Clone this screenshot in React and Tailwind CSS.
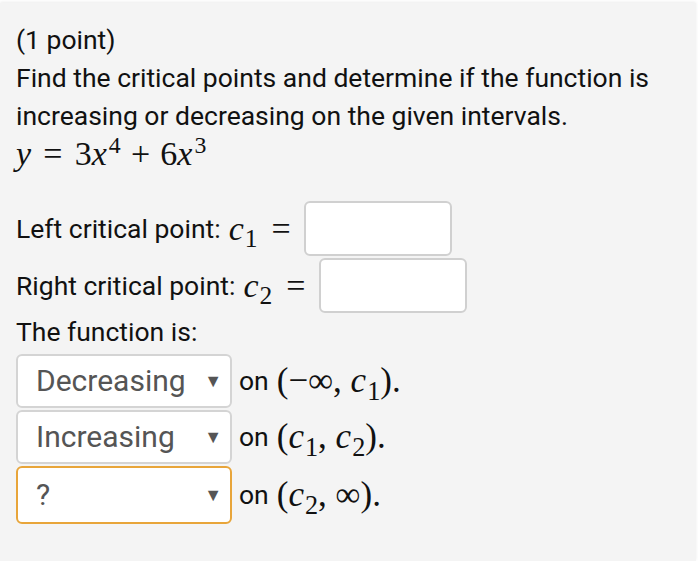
import React from 'react';

const serif = { fontFamily: '"Liberation Serif", "DejaVu Serif", serif' };

const V = ({ children }) => <span className="italic">{children}</span>;

const C = ({ n }) => (
  <span>
    <V>c</V>
    <sub className="ml-[1px] text-[0.75em] not-italic align-[-0.06em]">{n}</sub>
  </span>
);

const Select = ({ value, active }) => (
  <div
    className={`flex w-[216px] items-center justify-between rounded-[6px] bg-white pl-[18px] pr-[8px] text-[30px] text-[#555] ${
      active ? 'h-[58px] border-2 border-[#e8a53a]' : 'h-[54px] border-2 border-[#d4d4d4]'
    }`}
  >
    <span>{value}</span>
    <span className="text-[18px] text-[#555]">▼</span>
  </div>
);

const Row = ({ value, active, children }) => (
  <div className="flex items-center">
    <Select value={value} active={active} />
    <span className="ml-[7px]">on</span>
    <span className="ml-[8px] text-[35px]" style={serif}>
      {children}
    </span>
  </div>
);

const App = () => {
  return (
    <div className="h-[561px] w-[698px] bg-white pt-[3px] pr-[2px]" style={{ fontFamily: 'Roboto, "Noto Sans", sans-serif' }}>
      <div className="h-full bg-[#f4f4f4] px-[16px] pt-[18px] text-[26.5px] leading-[38px] text-[#111] shadow-[0_-1px_3px_rgba(0,0,0,0.08)]">
        <div>(1 point)</div>
        <div>Find the critical points and determine if the function is increasing or decreasing on the given intervals.</div>
        <div className="text-[34px] leading-[38px]" style={serif}>
          <V>y</V>
          <span className="mx-[0.36em]">=</span>3<V>x</V>
          <sup className="ml-[2px] text-[0.7em]">4</sup>
          <span className="mx-[0.3em]">+</span>6<V>x</V>
          <sup className="ml-[2px] text-[0.7em]">3</sup>
        </div>

        <div className="mt-[28px] flex items-center">
          <span>Left critical point:</span>
          <span className="ml-[8px] text-[34px]" style={serif}>
            <C n="1" />
            <span className="ml-[14px]">=</span>
          </span>
          <div className="ml-[13px] h-[55px] w-[148px] rounded-[6px] border-2 border-[#d0d0d0] bg-white" />
        </div>
        <div className="mt-[2px] flex items-center">
          <span>Right critical point:</span>
          <span className="ml-[8px] text-[34px]" style={serif}>
            <C n="2" />
            <span className="ml-[14px]">=</span>
          </span>
          <div className="ml-[14px] h-[55px] w-[148px] rounded-[6px] border-2 border-[#d0d0d0] bg-white" />
        </div>

        <div>The function is:</div>
        <div className="mt-[3px] flex flex-col gap-[2px]">
          <Row value="Decreasing">
            (−∞, <C n="1" />).
          </Row>
          <Row value="Increasing">
            (<C n="1" />, <C n="2" />).
          </Row>
          <Row value="?" active>
            (<C n="2" />, ∞).
          </Row>
        </div>
      </div>
    </div>
  );
};

export default App;
